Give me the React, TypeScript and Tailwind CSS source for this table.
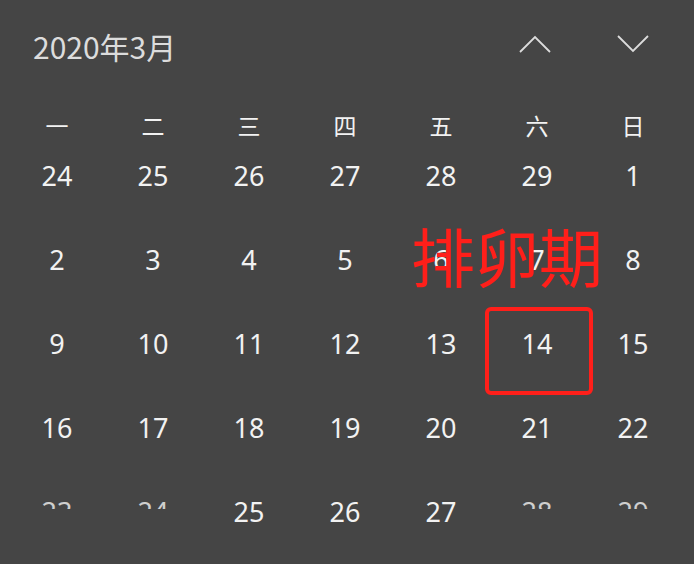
import React from "react";

const weekdays = ["一", "二", "三", "四", "五", "六", "日"];
const rows: number[][] = [
  [24, 25, 26, 27, 28, 29, 1],
  [2, 3, 4, 5, 6, 7, 8],
  [9, 10, 11, 12, 13, 14, 15],
  [16, 17, 18, 19, 20, 21, 22],
  [23, 24, 25, 26, 27, 28, 29],
];

const font = { fontFamily: '"Noto Sans", "Noto Sans CJK SC", sans-serif' };

export default function App() {
  return (
    <div
      className="relative w-[694px] h-[564px] overflow-hidden bg-[#454545] text-[#f2f2f2]"
      style={font}
    >
      {/* header */}
      <div className="flex h-[100px] items-start pt-[26px] pl-[33px]">
        <div className="text-[30px] leading-[40px] text-[#dcdcdc] [font-family:'Noto_Sans_CJK_SC',sans-serif]">
          2020年3月
        </div>
        <div className="ml-auto flex items-center gap-[64px] pr-[44px] pt-[8px]">
          <svg width="34" height="20" viewBox="0 0 34 20" fill="none">
            <path d="M2 18 L17 3 L32 18" stroke="#dcdcdc" strokeWidth="1.8" />
          </svg>
          <svg width="34" height="20" viewBox="0 0 34 20" fill="none">
            <path d="M2 2 L17 17 L32 2" stroke="#dcdcdc" strokeWidth="1.8" />
          </svg>
        </div>
      </div>

      {/* weekdays */}
      <div className="ml-[9px] grid h-[50px] w-[672px] grid-cols-7 items-center">
        {weekdays.map((w) => (
          <div
            key={w}
            className="text-center text-[23px] leading-[30px] [font-family:'Noto_Sans_CJK_SC',sans-serif]"
          >
            {w}
          </div>
        ))}
      </div>

      {/* days */}
      <div className="ml-[9px] grid w-[672px] grid-cols-7">
        {rows.map((r, ri) =>
          r.map((d, ci) => {
            const clipped = ri === 4 && (ci < 2 || ci > 4);
            return (
              <div key={`${ri}-${ci}`} className="flex h-[84px] justify-center pt-[9px]">
                {clipped ? (
                  <div className="h-[14px] overflow-hidden text-[27px] leading-[34px] opacity-80">
                    {d}
                  </div>
                ) : (
                  <div className="text-[27px] leading-[34px]">{d}</div>
                )}
              </div>
            );
          })
        )}
      </div>

      {/* annotations */}
      <div className="absolute left-[411px] top-[210px] text-[64px] leading-[88px] text-[#ff1f1a] [font-family:'Noto_Sans_CJK_SC',sans-serif]">
        排卵期
      </div>
      <div className="absolute left-[485px] top-[307px] h-[88px] w-[108px] rounded-[6px] border-[4px] border-[#ff1f1a]" />
    </div>
  );
}
